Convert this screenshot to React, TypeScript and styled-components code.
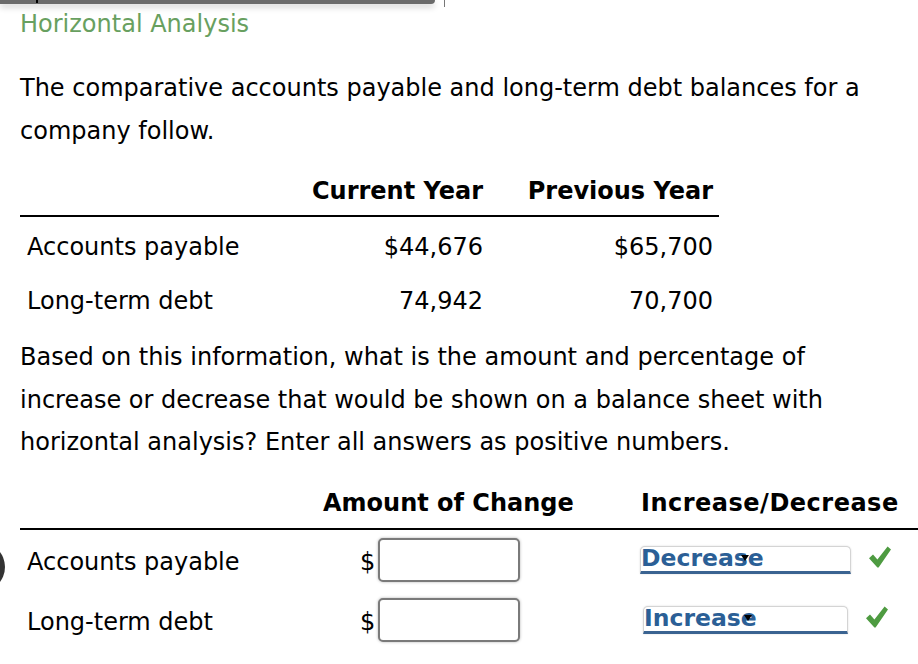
import React from "react";
import styled, { createGlobalStyle } from "styled-components";

const GlobalStyle = createGlobalStyle`
  html, body { margin: 0; padding: 0; background: #fff; }
  body {
    font-family: "DejaVu Sans", Verdana, sans-serif;
    color: #000;
    font-size: 24px;
  }
`;

const Page = styled.div`
  position: relative;
  width: 918px;
  height: 664px;
  overflow: hidden;
`;

const TopStrip = styled.div`
  display: flex;
  align-items: flex-start;
  height: 4px;
`;

const Bar = styled.div`
  position: relative;
  width: 435px;
  height: 4px;
  background: #6b6b6b;
  border-bottom-right-radius: 8px;
  box-shadow: 0 3px 6px rgba(0, 0, 0, 0.22);
  &::before {
    content: "";
    position: absolute;
    left: 36px;
    top: 0;
    width: 2px;
    height: 3px;
    background: #000;
  }
`;

const Divider = styled.div`
  margin-left: 9px;
  width: 1px;
  height: 7px;
  background: #777;
`;

const Content = styled.div`
  padding-left: 20px;
`;

const Title = styled.h1`
  margin: 6px 0 0;
  font-size: 24px;
  font-weight: normal;
  line-height: 28px;
  color: #68a060;
`;

const Para = styled.p<{ $top: number; $lh: number }>`
  margin: ${(p) => p.$top}px 0 0;
  font-size: 24px;
  line-height: ${(p) => p.$lh}px;
  max-width: 860px;
`;

const Table1 = styled.div`
  margin-top: 24px;
  width: 699px;
`;

const Grid1 = styled.div`
  display: grid;
  grid-template-columns: 280px 189px 230px;
`;

const Head1 = styled(Grid1)`
  padding-bottom: 10px;
  border-bottom: 2px solid #000;
  font-weight: bold;
  line-height: 28px;
`;

const Body1 = styled.div`
  padding-top: 3px;
`;

const Row1 = styled(Grid1)`
  height: 54px;
  line-height: 54px;
`;

const Cell = styled.div<{ $align?: "left" | "right" }>`
  text-align: ${(p) => p.$align ?? "left"};
  padding: ${(p) => (p.$align === "right" ? "0 6px 0 0" : "0 0 0 7px")};
  white-space: nowrap;
`;

const Table2 = styled.div`
  margin-top: 25px;
  width: 898px;
`;

const Grid2 = styled.div`
  display: grid;
  grid-template-columns: 300px 290px 308px;
`;

const Head2 = styled(Grid2)`
  padding-bottom: 11px;
  border-bottom: 2px solid #000;
  font-weight: bold;
  line-height: 28px;
`;

const HeadCell = styled.div<{ $pad: number; $spacing?: number }>`
  padding-left: ${(p) => p.$pad}px;
  letter-spacing: ${(p) => p.$spacing ?? 0}px;
  white-space: nowrap;
`;

const Body2 = styled.div`
  padding-top: 2px;
`;

const Row2 = styled(Grid2)`
  height: 60px;
  line-height: 60px;
`;

const AmountCell = styled.div`
  display: flex;
  align-items: center;
  padding-left: 40px;
`;

const Dollar = styled.span`
  line-height: 1;
`;

const Input = styled.div`
  margin-left: 3px;
  margin-bottom: 3px;
  width: 138px;
  height: 40px;
  border: 2px solid #7a7a7a;
  border-radius: 5px;
  background: #fff;
  box-shadow: 0 0 3px rgba(0, 0, 0, 0.3);
`;

const ChoiceCell = styled.div<{ $pad: number }>`
  display: flex;
  align-items: center;
  padding-left: ${(p) => p.$pad}px;
`;

const Select = styled.div<{ $w: number }>`
  position: relative;
  margin-bottom: 4px;
  width: ${(p) => p.$w}px;
  height: 24px;
  border: 1px solid #d4d4d4;
  border-bottom: 3px solid #3a6391;
  border-radius: 5px 5px 0 0;
  box-sizing: content-box;
  box-shadow: 0 0 2px rgba(0, 0, 0, 0.15);
  background: #fff;
  font-size: 23.5px;
  font-weight: bold;
  line-height: 22px;
  color: #2b5f96;
  white-space: nowrap;
`;

const Arrow = styled.span`
  position: absolute;
  left: 100px;
  top: 8px;
  width: 0;
  height: 0;
  border-left: 4px solid transparent;
  border-right: 4px solid transparent;
  border-top: 6px solid #000;
`;

const Check = styled.svg`
  margin-left: 18px;
  margin-bottom: 9px;
  width: 22px;
  height: 22px;
  flex: none;
`;

const Marker = styled.div`
  position: absolute;
  left: -45px;
  top: 542px;
  width: 50px;
  height: 50px;
  border-radius: 50%;
  background: #333;
`;

const CheckMark = () => (
  <Check viewBox="0 0 22 22">
    <path
      d="M0 12.2 L4 8.6 L8.4 13.4 L18.6 0.4 L22 3.4 L9.6 21.6 L8.4 21.6 Z"
      fill="#4e9b41"
    />
  </Check>
);

const rows1 = [
  ["Accounts payable", "$44,676", "$65,700"],
  ["Long-term debt", "74,942", "70,700"],
];

const rows2 = [
  { label: "Accounts payable", choice: "Decrease", pad: 30, w: 209 },
  { label: "Long-term debt", choice: "Increase", pad: 33, w: 203 },
];

export default function App() {
  return (
    <>
      <GlobalStyle />
      <Page>
        <TopStrip>
          <Bar />
          <Divider />
        </TopStrip>
        <Content>
          <Title>Horizontal Analysis</Title>
          <Para $top={29} $lh={43}>
            The comparative accounts payable and long-term debt balances for a
            company follow.
          </Para>
          <Table1>
            <Head1>
              <Cell />
              <Cell $align="right">Current Year</Cell>
              <Cell $align="right">Previous Year</Cell>
            </Head1>
            <Body1>
              {rows1.map((r) => (
                <Row1 key={r[0]}>
                  <Cell>{r[0]}</Cell>
                  <Cell $align="right">{r[1]}</Cell>
                  <Cell $align="right">{r[2]}</Cell>
                </Row1>
              ))}
            </Body1>
          </Table1>
          <Para $top={8} $lh={42.5}>
            Based on this information, what is the amount and percentage of
            increase or decrease that would be shown on a balance sheet with
            horizontal analysis? Enter all answers as positive numbers.
          </Para>
          <Table2>
            <Head2>
              <HeadCell $pad={0} />
              <HeadCell $pad={3}>Amount of Change</HeadCell>
              <HeadCell $pad={31} $spacing={0.5}>
                Increase/Decrease
              </HeadCell>
            </Head2>
            <Body2>
              {rows2.map((r) => (
                <Row2 key={r.label}>
                  <Cell>{r.label}</Cell>
                  <AmountCell>
                    <Dollar>$</Dollar>
                    <Input />
                  </AmountCell>
                  <ChoiceCell $pad={r.pad}>
                    <Select $w={r.w}>
                      {r.choice}
                      <Arrow />
                    </Select>
                    <CheckMark />
                  </ChoiceCell>
                </Row2>
              ))}
            </Body2>
          </Table2>
        </Content>
        <Marker />
      </Page>
    </>
  );
}
